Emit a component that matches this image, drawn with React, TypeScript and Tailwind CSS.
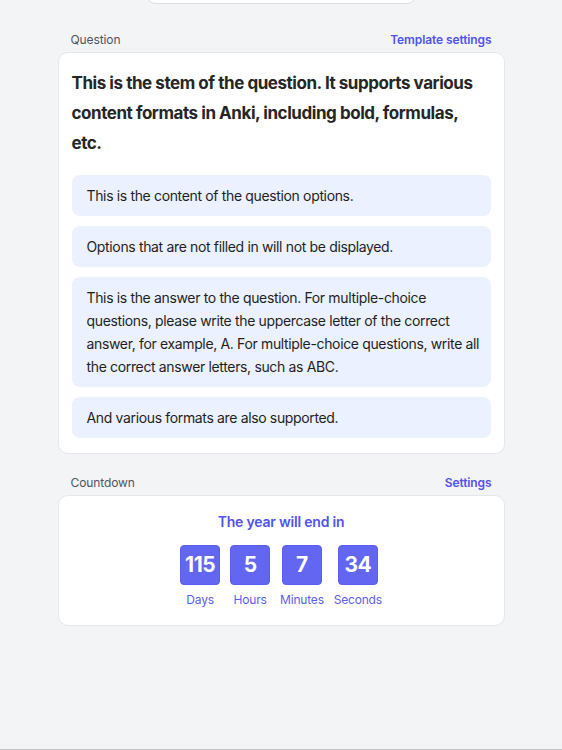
const options = [
  'This is the content of the question options.',
  'Options that are not filled in will not be displayed.',
  'This is the answer to the question. For multiple-choice questions, please write the uppercase letter of the correct answer, for example, A. For multiple-choice questions, write all the correct answer letters, such as ABC.',
  'And various formats are also supported.',
]

const countdown = [
  { value: '115', label: 'Days' },
  { value: '5', label: 'Hours' },
  { value: '7', label: 'Minutes' },
  { value: '34', label: 'Seconds' },
]

function SectionHeader({ title, action }: { title: string; action: string }) {
  return (
    <div className="flex items-center justify-between px-[13px] mb-[4px] h-4">
      <span className="text-[12px] leading-4 text-[#4b5563] tracking-[-0.1px]">{title}</span>
      <span className="text-[12px] leading-4 font-semibold text-[#5053ee] tracking-[-0.1px]">{action}</span>
    </div>
  )
}

export default function App() {
  return (
    <div
      className="h-[750px] overflow-hidden bg-[#f3f4f6] border-b border-[#c2c2c4]"
      style={{ fontFamily: 'Inter, "Noto Sans", sans-serif' }}
    >
      {/* Cut-off card at the top */}
      <div className="mx-auto -mt-[40px] h-[44px] w-[271px] rounded-[10px] border border-[#dcdde0] bg-white" />

      <div className="mx-auto w-[447px] pt-[28px]">
        {/* Question */}
        <SectionHeader title="Question" action="Template settings" />
        <div className="rounded-[10px] border border-[#e5e7eb] bg-white px-[13px] pt-[15px] pb-[15px]">
          <h2 className="text-[17px] leading-[30px] font-bold text-[#262626] tracking-[-0.45px]">
            This is the stem of the question. It supports various content formats in Anki, including bold, formulas, etc.
          </h2>
          <div className="mt-[17px] flex flex-col gap-[10px]">
            {options.map((text) => (
              <div
                key={text}
                className="rounded-[8px] bg-[#ebf1fe] pl-[15px] pr-[4px] py-[9px] text-[14px] leading-[23px] text-[#1f1f1f] tracking-[-0.35px]"
              >
                {text}
              </div>
            ))}
          </div>
        </div>

        {/* Countdown */}
        <div className="mt-[21px]">
          <SectionHeader title="Countdown" action="Settings" />
          <div className="rounded-[10px] border border-[#e5e7eb] bg-white pt-[16px] pb-[17px] flex flex-col items-center">
            <div className="text-[14px] leading-5 font-semibold text-[#5053ee] tracking-[-0.2px]">The year will end in</div>
            <div className="mt-[13px] flex gap-[10px]">
              {countdown.map((c) => (
                <div key={c.label} className="flex flex-col items-center">
                  <div className="flex h-10 w-10 items-center justify-center rounded-[4px] border border-[#5a5ef0] bg-[#6366f1] text-[21px] font-bold text-white tracking-[-0.5px]">
                    {c.value}
                  </div>
                  <div className="mt-[7px] text-[12px] leading-4 text-[#5b5ef0] tracking-[-0.2px]">{c.label}</div>
                </div>
              ))}
            </div>
          </div>
        </div>
      </div>
    </div>
  )
}
